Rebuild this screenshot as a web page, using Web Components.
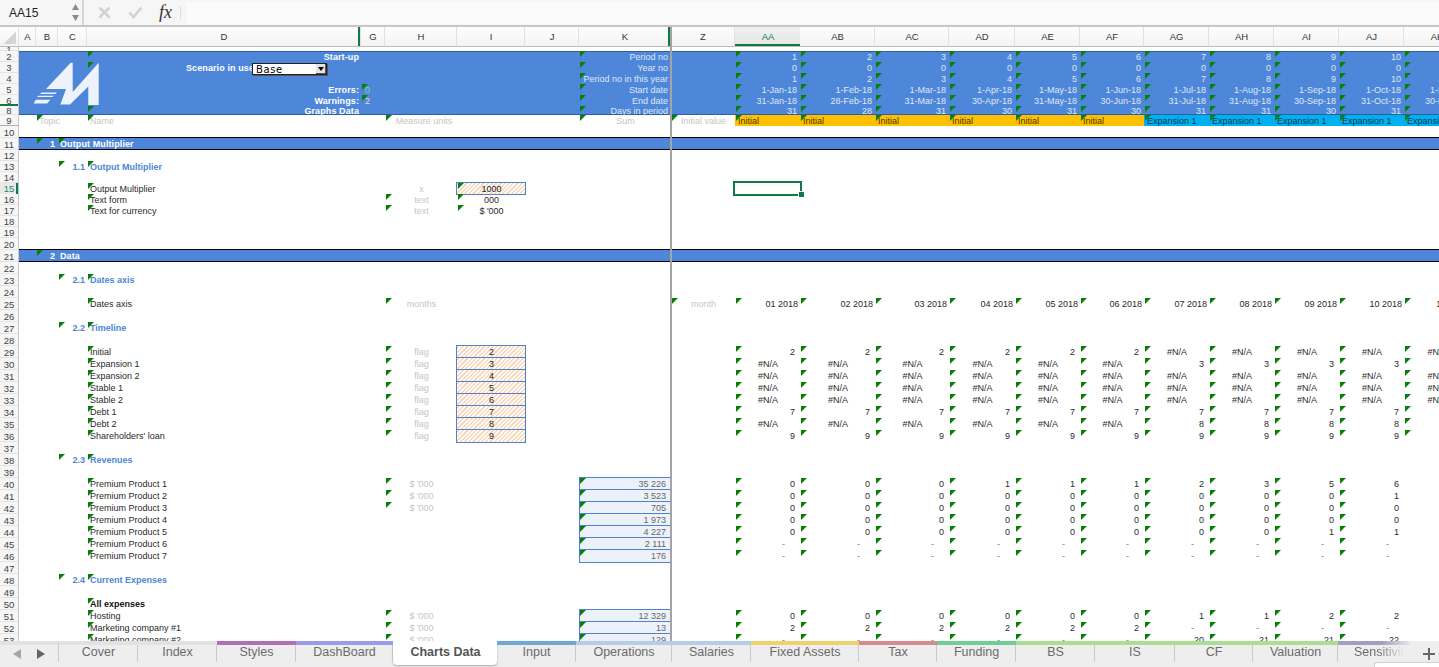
<!doctype html>
<html>
<head>
<meta charset="utf-8">
<title>Charts Data</title>
<style>
  html, body { margin: 0; height: 100%; overflow: hidden; background: #fff; }
  body { font-family: "Liberation Sans", Arial, sans-serif; }
</style>
</head>
<body>
<x-app></x-app>
<script>
  const FONT = '"Liberation Sans", Arial, sans-serif';

  customElements.define('x-formula-bar', class extends HTMLElement {
    connectedCallback() {
      this.attachShadow({mode: 'open'}).innerHTML = `
        <style>
          :host { display: flex; align-items: center; box-sizing: border-box; height: 27px; background: #f6f6f6;
                  border-bottom: 2px solid #c6c6c6; font-family: ${FONT}; color: #222; }
          .name { width: 62px; box-sizing: border-box; padding-left: 9px; font-size: 12px; }
          .spin { width: 22px; height: 25px; box-sizing: border-box; border-right: 2px solid #d6d6d6; }
          .spin svg { display: block; }
          .x { margin-left: 14px; }
          .c { margin-left: 17px; }
          .fx { margin-left: 16px; width: 21px; font: italic 18px "Liberation Serif", serif; color: #333; }
          .sep { width: 1px; height: 14px; background: #dcdcdc; }
          .input { flex: 1; height: 22px; margin-left: 6px; background: #fbfbfb; }
        </style>
        <div class="name">AA15</div>
        <div class="spin"><svg width="20" height="25"><path d="M13.5 4l3.5 6h-7z" fill="#8a8a8a"/><path d="M10 15h7l-3.5 6z" fill="#8a8a8a"/></svg></div>
        <svg class="x" width="13" height="13" viewBox="0 0 13 13"><path d="M1.5 1.5l10 10M11.5 1.5l-10 10" stroke="#d2d2d2" stroke-width="2.6" fill="none"/></svg>
        <svg class="c" width="15" height="13" viewBox="0 0 15 13"><path d="M1.5 6.5l4 4.5 8-9.5" stroke="#d2d2d2" stroke-width="2.6" fill="none"/></svg>
        <div class="fx">fx</div>
        <div class="sep"></div>
        <div class="input"></div>`;
    }
  });

  customElements.define('x-col-head', class extends HTMLElement {
    connectedCallback() {
      this.attachShadow({mode: 'open'}).innerHTML = `
        <style>
          :host { display: flex; align-items: center; justify-content: center; box-sizing: border-box; padding-left: 1px;
                  background: linear-gradient(#fdfdfd, #f4f4f4); border-right: 1px solid #e2e2e2;
                  border-bottom: 1px solid #bcbcbc; font: 9.5px ${FONT}; color: #333; }
          :host([sel]) { background: linear-gradient(#f0f0f0, #e6e6e6); color: #0f7a45; box-shadow: inset 0 -2px 0 #0f7a45; border-right: 0; }
          :host([mark]) { box-shadow: inset -2px 0 0 #0f7a45; }
        </style><slot></slot>`;
    }
  });

  customElements.define('x-row-head', class extends HTMLElement {
    connectedCallback() {
      this.attachShadow({mode: 'open'}).innerHTML = `
        <style>
          :host { display: flex; align-items: center; justify-content: center; box-sizing: border-box; overflow: hidden;
                  background: #f6f6f6; border-right: 1px solid #c8c8c8; box-shadow: inset 0 -1px 0 #e4e4e4;
                  font: 9.5px ${FONT}; color: #444; }
          :host([sel]) { color: #1c8a56; background: #e9e9e9; box-shadow: inset -2px 0 0 #0f7a45; }
          :host([mark]) { box-shadow: inset 0 -2px 0 #0f7a45; }
        </style><slot></slot>`;
    }
  });

  customElements.define('x-cell', class extends HTMLElement {
    connectedCallback() {
      this.attachShadow({mode: 'open'}).innerHTML = `
        <style>
          :host { display: flex; align-items: center; position: relative; box-sizing: border-box; min-width: 0;
                  padding: 0 var(--pr, 2px) 0 var(--pl, 3px); white-space: nowrap;
                  font: 9px ${FONT}; color: #2a2a2a; }
          :host([a=r]) { justify-content: flex-end; }
          :host([a=c]) { justify-content: center; }
          :host([tone=muted]) { color: #c6c6c6; }
          :host([tone=band]) { color: #dfe7f6; }
          :host([tone=head]) { color: #fff; font-weight: bold; letter-spacing: .1px; }
          :host([tone=sub]) { color: #4d86d8; font-weight: bold; }
          :host([tone=black]) { color: #111; font-weight: bold; }
          :host([tone=ok]) { color: #7fdc7f; }
          :host([tone=warn]) { color: #f6d2c2; }
          :host([tone=dash]) { color: #777; }
          :host([box=input]) { outline: 1px solid #4d82d0; z-index: 2;
                  background: repeating-linear-gradient(-45deg, #fcd9bc 0 1.5px, #fff 1.5px 3px); color: #222; }
          :host([box=sum]) { outline: 1px solid #4d82d0; z-index: 2; margin-left: 1px; background: #edf2fa; color: #666; }
          :host([fill=orange]) { background: #ffc000; color: #4a3a00; }
          :host([fill=cyan]) { background: #00b0f0; color: #0b3a55; }
          i { display: none; position: absolute; left: 1px; top: 0; width: 6px; height: 6px; background: #078007;
              clip-path: polygon(0 0, 100% 0, 0 100%); z-index: 3; }
          :host([box=sum]) i { left: 0; }
          :host([flag]) i { display: block; }
        </style><i></i><slot></slot>`;
    }
  });

  customElements.define('x-band', class extends HTMLElement {
    connectedCallback() {
      this.attachShadow({mode: 'open'}).innerHTML = `
        <style>
          :host { display: block; box-sizing: border-box; background: #4e87d9; border-top: 1px solid #000; border-bottom: 1px solid #000; margin-top: -1px; }
          :host([top]) { border-color: #2f5f9f; margin-top: 0; }
        </style>`;
    }
  });

  customElements.define('x-logo', class extends HTMLElement {
    connectedCallback() {
      this.attachShadow({mode: 'open'}).innerHTML = `
        <style>
          :host { display: block; pointer-events: none; }
          svg { display: block; margin: 9px 0 0 13px; }
        </style>
        <svg width="70" height="48" viewBox="32 60 70 48">
          <path fill="#eef2fb" d="M70.7 62.7h2v29.3l26-29.3v42.3H88.3V86.5L70 104.5H60.3L66 89H46z"/>
          <path fill="#eef2fb" d="M41.5 92.6h15.5l-1.6 1.5H40zM38.3 95.7h15.6l-1.5 1.3H37zM35.8 99.8H50.3l-3.2 3.6H33.6z"/>
        </svg>`;
    }
  });

  customElements.define('x-select', class extends HTMLElement {
    connectedCallback() {
      this.attachShadow({mode: 'open'}).innerHTML = `
        <style>
          :host { display: flex; align-items: center; justify-content: space-between; box-sizing: border-box; width: 75px; height: 12px;
                  margin: 1px 0 0 165px; background: #fff; border: 1px solid #222; box-shadow: 1px 1px 0 #555; z-index: 4;
                  font: 10px "DejaVu Sans", sans-serif; letter-spacing: .6px; color: #000; padding-left: 3px; }
          b { display: flex; align-items: center; justify-content: center; width: 10px; height: 10px; background: #e4e4e4; box-shadow: inset -1px -1px 0 #555; }
          b::after { content: ""; border: 3px solid transparent; border-top: 4px solid #000; border-bottom: 0; }
        </style><slot></slot><b></b>`;
    }
  });

  customElements.define('x-selection', class extends HTMLElement {
    connectedCallback() {
      this.attachShadow({mode: 'open'}).innerHTML = `
        <style>
          :host { display: block; position: relative; outline: 2px solid #0f7a45; outline-offset: 0; z-index: 5; }
          i { position: absolute; right: -5px; bottom: -4px; width: 7px; height: 7px; background: #0f7a45; border: 1px solid #fff; box-sizing: border-box; }
        </style><i></i>`;
    }
  });

  const COLS = ['A','B','C','D','G','H','I','J','K','Z','AA','AB','AC','AD','AE','AF','AG','AH','AI','AJ','AK'];
  const WIDTHS = [17,22,29,274,24,72,68,54,92,64,65,75,74,66,65,64,65,65,65,65,66];
  const DATA = COLS.slice(10);
  const ROW_H = {1:4,2:11,3:11,4:11,5:11,6:11,7:0,8:9,9:11,10:12,11:12,12:11,13:11,14:11,15:11,16:11,17:11,18:11,19:11,20:12,21:12};

  customElements.define('x-sheet', class extends HTMLElement {
    connectedCallback() {
      const root = this.attachShadow({mode: 'open'});
      const rows = [];
      for (let r = 1; r <= 53; r++) rows.push((ROW_H[r] === undefined ? 12 : ROW_H[r]) + 'px');
      root.innerHTML = `
        <style>
          :host { display: block; position: relative; height: 614px; overflow: hidden; background: #fff; }
          .grid { display: grid; width: max-content;
                  grid-template-columns: 19px ${WIDTHS.map(w => w + 'px').join(' ')};
                  grid-template-rows: 20px ${rows.join(' ')}; }
          .freeze { position: absolute; left: 670px; top: 0; bottom: 0; width: 2px; background: #a4a4a4; z-index: 6; }
          .line { grid-column: 1 / -1; grid-row: 11; height: 1px; align-self: start; background: #b0b0b0; z-index: 3; margin-top: -1px; }
        </style>
        <div class="grid"></div><div class="freeze"></div>`;
      this.grid = root.querySelector('.grid');
      this.build();
    }

    add(tag, row, col, text, attrs) {
      const e = document.createElement(tag);
      e.style.gridRow = row;
      e.style.gridColumn = col;
      if (text !== undefined && text !== null) e.textContent = text;
      for (const k in (attrs || {})) {
        if (k === 'pr' || k === 'pl') e.style.setProperty('--' + k, attrs[k] + 'px');
        else e.setAttribute(k, attrs[k]);
      }
      this.grid.appendChild(e);
      return e;
    }

    // row n of the sheet sits on grid line n + 1, column name to its grid line
    cell(r, c, text, attrs) {
      return this.add('x-cell', r + 1, COLS.indexOf(c) + 2, text, attrs);
    }

    dataRow(r, values, attrs) {
      DATA.forEach((c, i) => {
        const v = values[i];
        if (v === undefined) return;
        const a = Object.assign({flag: ''}, attrs);
        if (v === '#N/A') a.a = 'c';
        else if (v === '-') { a.a = 'r'; a.pr = 15; a.tone = 'dash'; }
        else if (!a.a) { a.a = 'r'; a.pr = 5; }
        this.cell(r, c, v === '' ? null : v, a);
      });
    }

    labelled(r, name, unit, opts) {
      this.cell(r, 'D', name, {flag: ''});
      if (unit) {
        const a = {a: 'c', tone: 'muted'};
        if (!opts || !opts.noFlag) a.flag = '';
        this.cell(r, 'H', unit, a);
      }
    }

    section(r, num, title) {
      this.cell(r, 'C', num, {flag: '', a: 'r', tone: 'sub'});
      this.cell(r, 'D', title, {flag: '', tone: 'sub'});
    }

    build() {
      // column and row headers
      this.add('x-col-head', 1, 1, null, {});
      this.add('div', 1, 1).style.cssText += 'grid-row:1;grid-column:1;background:linear-gradient(135deg,transparent 50%,#d4d4d4 50%);margin:4px 3px 3px 3px;';
      COLS.forEach((c, i) => {
        const a = {};
        if (c === 'D' || c === 'K') a.mark = '';
        if (c === 'AA') a.sel = '';
        this.add('x-col-head', 1, i + 2, c, a);
      });
      for (let r = 1; r <= 53; r++) {
        if (r === 7) continue;
        const a = {};
        if (r === 15) a.sel = '';
        if (r === 6) a.mark = '';
        this.add('x-row-head', r + 1, 1, r, a);
      }

      // coloured bands
      this.add('x-band', '3 / 10', '2 / -1', null, {top: ''});
      this.add('x-band', 12, '2 / -1');
      this.add('x-band', 22, '2 / -1');
      this.add('div', 11, 1).className = 'line';

      // top block
      this.cell(2, 'D', null, {flag: ''});
      this.cell(3, 'D', null, {flag: ''});
      this.cell(8, 'D', null, {flag: ''});
      this.add('x-logo', '3 / 10', '2 / 6');
      this.cell(2, 'D', 'Start-up', {a: 'r', tone: 'head'});
      this.cell(3, 'D', 'Scenario in use', {a: 'r', tone: 'head', pr: 107});
      this.add('x-select', 4, 5, 'Base');
      this.cell(5, 'D', 'Errors:', {a: 'r', tone: 'head'});
      this.cell(6, 'D', 'Warnings:', {a: 'r', tone: 'head'});
      this.cell(8, 'D', 'Graphs Data', {a: 'r', tone: 'head'});
      this.cell(5, 'G', '0', {flag: '', tone: 'ok', pl: 4});
      this.cell(6, 'G', '2', {flag: '', tone: 'warn', pl: 4});

      const heads = [[2,'Period no'],[3,'Year no'],[4,'Period no in this year'],[5,'Start date'],[6,'End date'],[8,'Days in period']];
      heads.forEach(h => this.cell(h[0], 'K', h[1], {flag: '', a: 'r', tone: 'band', pr: 3}));
      const starts = ['1-Jan-18','1-Feb-18','1-Mar-18','1-Apr-18','1-May-18','1-Jun-18','1-Jul-18','1-Aug-18','1-Sep-18','1-Oct-18','1-Nov-18'];
      const ends = ['31-Jan-18','28-Feb-18','31-Mar-18','30-Apr-18','31-May-18','30-Jun-18','31-Jul-18','31-Aug-18','30-Sep-18','31-Oct-18','30-Nov-18'];
      const days = [31,28,31,30,31,30,31,31,30,31,30];
      const nums = DATA.map((c, i) => i + 1);
      const band = {tone: 'band', a: 'r', pr: 3};
      this.dataRow(2, nums, band);
      this.dataRow(3, nums.map(() => 0), band);
      this.dataRow(4, nums, band);
      this.dataRow(5, starts, band);
      this.dataRow(6, ends, band);
      this.dataRow(8, days, band);

      // titles row
      this.cell(9, 'B', 'Topic', {flag: '', tone: 'muted'});
      this.cell(9, 'D', 'Name', {flag: '', tone: 'muted'});
      this.cell(9, 'H', 'Measure units', {flag: '', tone: 'muted', a: 'c', pl: 8});
      this.cell(9, 'K', 'Sum', {flag: '', tone: 'muted', a: 'c'});
      this.cell(9, 'Z', 'Initial value', {flag: '', tone: 'muted', a: 'c'});
      DATA.forEach((c, i) => {
        if (i < 6) this.cell(9, c, 'Initial', {flag: '', fill: 'orange'});
        else this.cell(9, c, 'Expansion 1', {flag: '', fill: 'cyan'}).style.overflow = 'hidden';
      });

      // 1 Output Multiplier
      this.cell(11, 'B', '1', {flag: '', a: 'r', tone: 'head', pr: 3});
      this.cell(11, 'C', 'Output Multiplier', {flag: '', tone: 'head', pl: 2});
      this.section(13, '1.1', 'Output Multiplier');
      this.labelled(15, 'Output Multiplier', 'x', {noFlag: true});
      this.cell(15, 'I', '1000', {flag: '', a: 'c', box: 'input'});
      this.labelled(16, 'Text form', 'text');
      this.cell(16, 'I', '000', {flag: '', a: 'c'});
      this.labelled(17, 'Text for currency', 'text');
      this.cell(17, 'I', "$ '000", {flag: '', a: 'c'});
      this.add('x-selection', 16, COLS.indexOf('AA') + 2);

      // 2 Data
      this.cell(21, 'B', '2', {flag: '', a: 'r', tone: 'head', pr: 3});
      this.cell(21, 'C', 'Data', {tone: 'head', pl: 2});
      this.section(23, '2.1', 'Dates axis');
      this.labelled(25, 'Dates axis', 'months');
      this.cell(25, 'Z', 'month', {flag: '', tone: 'muted', a: 'c'});
      this.dataRow(25, nums.map(n => String(n).padStart(2, '0') + ' 2018'), {a: 'r', pr: 2});

      this.section(27, '2.2', 'Timeline');
      const NA = '#N/A';
      const rep = (a, n) => new Array(n).fill(a);
      const flags = [
        ['Initial', 2, rep(2, 6).concat(rep(NA, 5))],
        ['Expansion 1', 3, rep(NA, 6).concat(rep(3, 4), [''])],
        ['Expansion 2', 4, rep(NA, 11)],
        ['Stable 1', 5, rep(NA, 11)],
        ['Stable 2', 6, rep(NA, 11)],
        ['Debt 1', 7, rep(7, 11)],
        ['Debt 2', 8, rep(NA, 6).concat(rep(8, 5))],
        ["Shareholders' loan", 9, rep(9, 11)]
      ];
      flags.forEach((f, i) => {
        const r = 29 + i;
        this.labelled(r, f[0], 'flag');
        this.cell(r, 'I', f[1], {a: 'c', box: 'input'});
        this.dataRow(r, f[2]);
      });

      this.section(38, '2.3', 'Revenues');
      const zeros = rep(0, 10);
      const dash = rep('-', 10);
      const revenues = [
        ['Premium Product 1', '35 226', [0,0,0,1,1,1,2,3,5,6]],
        ['Premium Product 2', '3 523', rep(0, 9).concat(1)],
        ['Premium Product 3', '705', zeros],
        ['Premium Product 4', '1 973', zeros],
        ['Premium Product 5', '4 227', rep(0, 8).concat(1, 1)],
        ['Premium Product 6', '2 111', dash],
        ['Premium Product 7', '176', dash]
      ];
      revenues.forEach((p, i) => {
        const r = 40 + i;
        this.labelled(r, p[0], i < 3 ? "$ '000" : null);
        this.cell(r, 'K', p[1], {flag: '', a: 'r', box: 'sum', pr: 5});
        this.dataRow(r, p[2]);
      });

      this.section(48, '2.4', 'Current Expenses');
      this.cell(50, 'D', 'All expenses', {flag: '', tone: 'black'});
      const expenses = [
        ['Hosting', '12 329', rep(0, 6).concat(1, 1, 2, 2)],
        ['Marketing company #1', '13', rep(2, 6).concat(rep('-', 4))],
        ['Marketing company #2', '129', rep('-', 6).concat(20, 21, 21, 22)]
      ];
      expenses.forEach((p, i) => {
        const r = 51 + i;
        this.labelled(r, p[0], "$ '000");
        this.cell(r, 'K', p[1], {flag: '', a: 'r', box: 'sum', pr: 5});
        this.dataRow(r, p[2]);
      });
    }
  });

  customElements.define('x-tab', class extends HTMLElement {
    connectedCallback() {
      this.attachShadow({mode: 'open'}).innerHTML = `
        <style>
          :host { display: flex; flex-direction: column; box-sizing: border-box; flex: none; width: var(--w); height: 21px;
                  font: 12.5px ${FONT}; color: #6b6b6b; }
          .top { height: 4px; background: var(--c, #e2e2e2); }
          .label { display: flex; align-items: center; justify-content: center; box-sizing: border-box; height: 17px; overflow: hidden; white-space: nowrap;
                   padding: 0 0 3px 1px; border-right: 1px solid #cacaca; }
          :host([active]) { height: 24px; background: #fff; color: #555; font-weight: bold; border-radius: 0 0 4px 4px; box-shadow: 0 1px 2px #aaa; }
          :host([active]) .top { background: #fff; }
          :host([active]) .label { border-right: 0; }
          :host([fade]) .top { background: linear-gradient(90deg, var(--c) 60%, #e6e6e6); }
          :host([fade]) .label { justify-content: flex-start; padding-left: 16px; -webkit-mask-image: linear-gradient(90deg, #000 55%, transparent 92%); }
        </style>
        <div class="top"></div><div class="label"><slot></slot></div>`;
    }
  });

  const TABS = [
    ['Cover', 79], ['Index', 79], ['Styles', 79, '#b06fb8'], ['DashBoard', 97, '#9a9bec'], ['Charts Data', 104, null, 'active'],
    ['Input', 79, '#6fa8d6'], ['Operations', 96, '#b5cde8'], ['Salaries', 79, '#b5cde8'], ['Fixed Assets', 108, '#f2d070'],
    ['Tax', 78, '#d88b8f'], ['Funding', 79, '#70cd95'], ['BS', 79, '#aade90'], ['IS', 80, '#aade90'], ['CF', 78, '#aade90'],
    ['Valuation', 85, '#aade90'], ['Sensitivity', 72, '#a59cc4', 'fade']
  ];

  customElements.define('x-tabs', class extends HTMLElement {
    connectedCallback() {
      const root = this.attachShadow({mode: 'open'});
      root.innerHTML = `
        <style>
          :host { display: flex; position: relative; height: 26px; background: #eeeeee; overflow: hidden; }
          .nav { display: flex; flex: none; width: 59px; box-sizing: border-box; border-right: 1px solid #cacaca; height: 21px; border-top: 4px solid #e2e2e2; }
          .nav svg { display: block; }
          .plus { flex: none; width: 29px; }
          .plus svg { display: block; margin: 7px 0 0 13px; }
          .corner { position: absolute; right: 0; bottom: 0; width: 64px; height: 4px; background: #fff; border: 1px solid #d0d0d0; border-width: 1px 0 0 1px; border-radius: 3px 0 0 0; }
        </style>
        <div class="nav"><svg width="58" height="17"><path d="M21 4v10l-8-5z" fill="#a6a6a6"/><path d="M37 4l8 5-8 5z" fill="#666"/></svg></div>
        <div class="plus"></div>
        <div class="corner"></div>`;
      const plus = root.querySelector('.plus');
      plus.innerHTML = '<svg width="12" height="12"><path d="M6 0v12M0 6h12" stroke="#666" stroke-width="2"/></svg>';
      TABS.forEach(t => {
        const tab = document.createElement('x-tab');
        tab.textContent = t[0];
        tab.style.setProperty('--w', t[1] + 'px');
        if (t[2]) tab.style.setProperty('--c', t[2]);
        if (t[3]) tab.setAttribute(t[3], '');
        root.insertBefore(tab, plus);
      });
    }
  });

  customElements.define('x-app', class extends HTMLElement {
    connectedCallback() {
      this.attachShadow({mode: 'open'}).innerHTML = `
        <style>:host { display: block; width: 1439px; height: 667px; overflow: hidden; }</style>
        <x-formula-bar></x-formula-bar>
        <x-sheet></x-sheet>
        <x-tabs></x-tabs>`;
    }
  });
</script>
</body>
</html>
